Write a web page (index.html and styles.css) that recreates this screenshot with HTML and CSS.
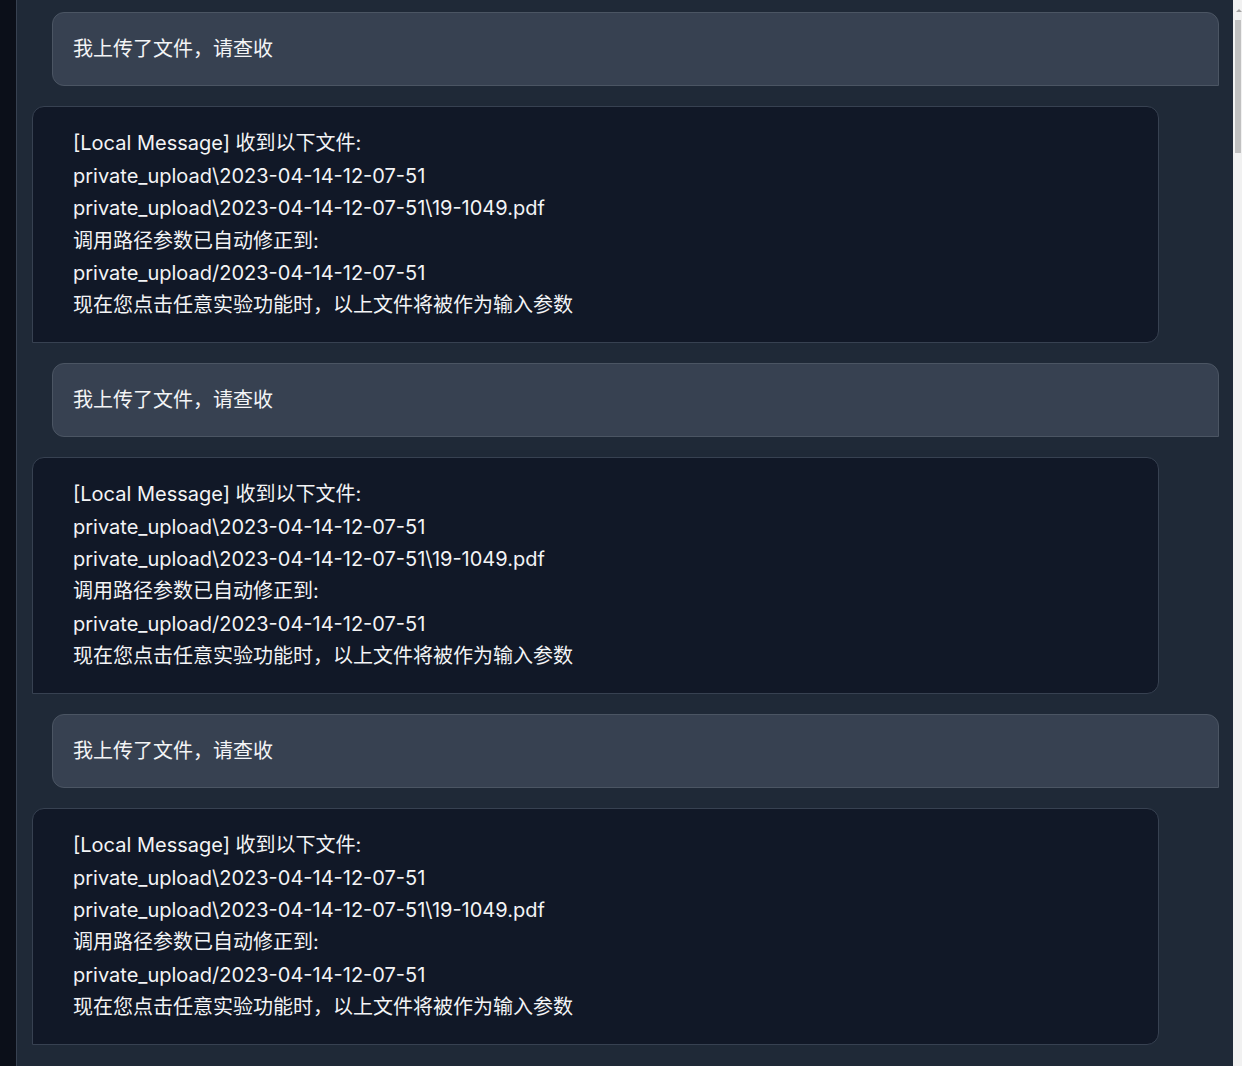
FILE: index.html
```html
<!DOCTYPE html>
<html lang="zh">
<head>
<meta charset="utf-8">
<link rel="stylesheet" href="styles.css">
</head>
<body>
<div class="page">
  <div class="side"></div>
  <div class="chat">
    <div class="msg user">我上传了文件，请查收</div>
    <div class="msg bot">
      <p>[Local Message] 收到以下文件:</p>
      <p>private_upload\2023-04-14-12-07-51</p>
      <p>private_upload\2023-04-14-12-07-51\19-1049.pdf</p>
      <p>调用路径参数已自动修正到:</p>
      <p>private_upload/2023-04-14-12-07-51</p>
      <p>现在您点击任意实验功能时，以上文件将被作为输入参数</p>
    </div>
    <div class="msg user">我上传了文件，请查收</div>
    <div class="msg bot">
      <p>[Local Message] 收到以下文件:</p>
      <p>private_upload\2023-04-14-12-07-51</p>
      <p>private_upload\2023-04-14-12-07-51\19-1049.pdf</p>
      <p>调用路径参数已自动修正到:</p>
      <p>private_upload/2023-04-14-12-07-51</p>
      <p>现在您点击任意实验功能时，以上文件将被作为输入参数</p>
    </div>
    <div class="msg user">我上传了文件，请查收</div>
    <div class="msg bot">
      <p>[Local Message] 收到以下文件:</p>
      <p>private_upload\2023-04-14-12-07-51</p>
      <p>private_upload\2023-04-14-12-07-51\19-1049.pdf</p>
      <p>调用路径参数已自动修正到:</p>
      <p>private_upload/2023-04-14-12-07-51</p>
      <p>现在您点击任意实验功能时，以上文件将被作为输入参数</p>
    </div>
  </div>
  <div class="scrollbar">
    <div class="arrow"></div>
    <div class="thumb"></div>
  </div>
</div>
</body>
</html>
```
FILE: styles.css
```css
* { box-sizing: border-box; }
html, body { margin: 0; padding: 0; height: 100%; overflow: hidden; }
body {
  background: #0b0f19;
  font-family: "Inter", "Noto Sans CJK SC", sans-serif;
  color: #f3f4f6;
}
.page {
  display: flex;
  height: 1066px;
}
.side {
  flex: 0 0 17px;
  background: #0b0f19;
  border-right: 1px solid #374151;
}
.chat {
  flex: 1;
  background: #1f2937;
  padding: 12px 15px 0 15px;
  display: flex;
  flex-direction: column;
  gap: 20px;
  overflow: hidden;
}
.msg {
  font-size: 20px;
  line-height: 32.4px;
  padding: 20px;
  border: 1px solid;
  flex: 0 0 auto;
}
.msg p { margin: 0; }
.user {
  margin-left: 20px;
  margin-right: -1px;
  background: #374151;
  border-color: #4b5563;
  border-radius: 12px 12px 0 12px;
}
.bot {
  margin-right: 59px;
  padding-left: 40px;
  background: #111827;
  border-color: #374151;
  border-radius: 12px 12px 12px 0;
}
.scrollbar {
  flex: 0 0 8px;
  background: #f1f1f1;
  padding-left: 2px;
  display: flex;
  flex-direction: column;
}
.arrow {
  width: 0;
  height: 0;
  margin: 9px 0 0 1px;
  border-left: 3px solid transparent;
  border-right: 3px solid transparent;
  border-bottom: 3px solid #a3a3a3;
}
.thumb {
  margin-top: 8px;
  width: 6px;
  height: 133px;
  background: #c1c1c1;
}
```
